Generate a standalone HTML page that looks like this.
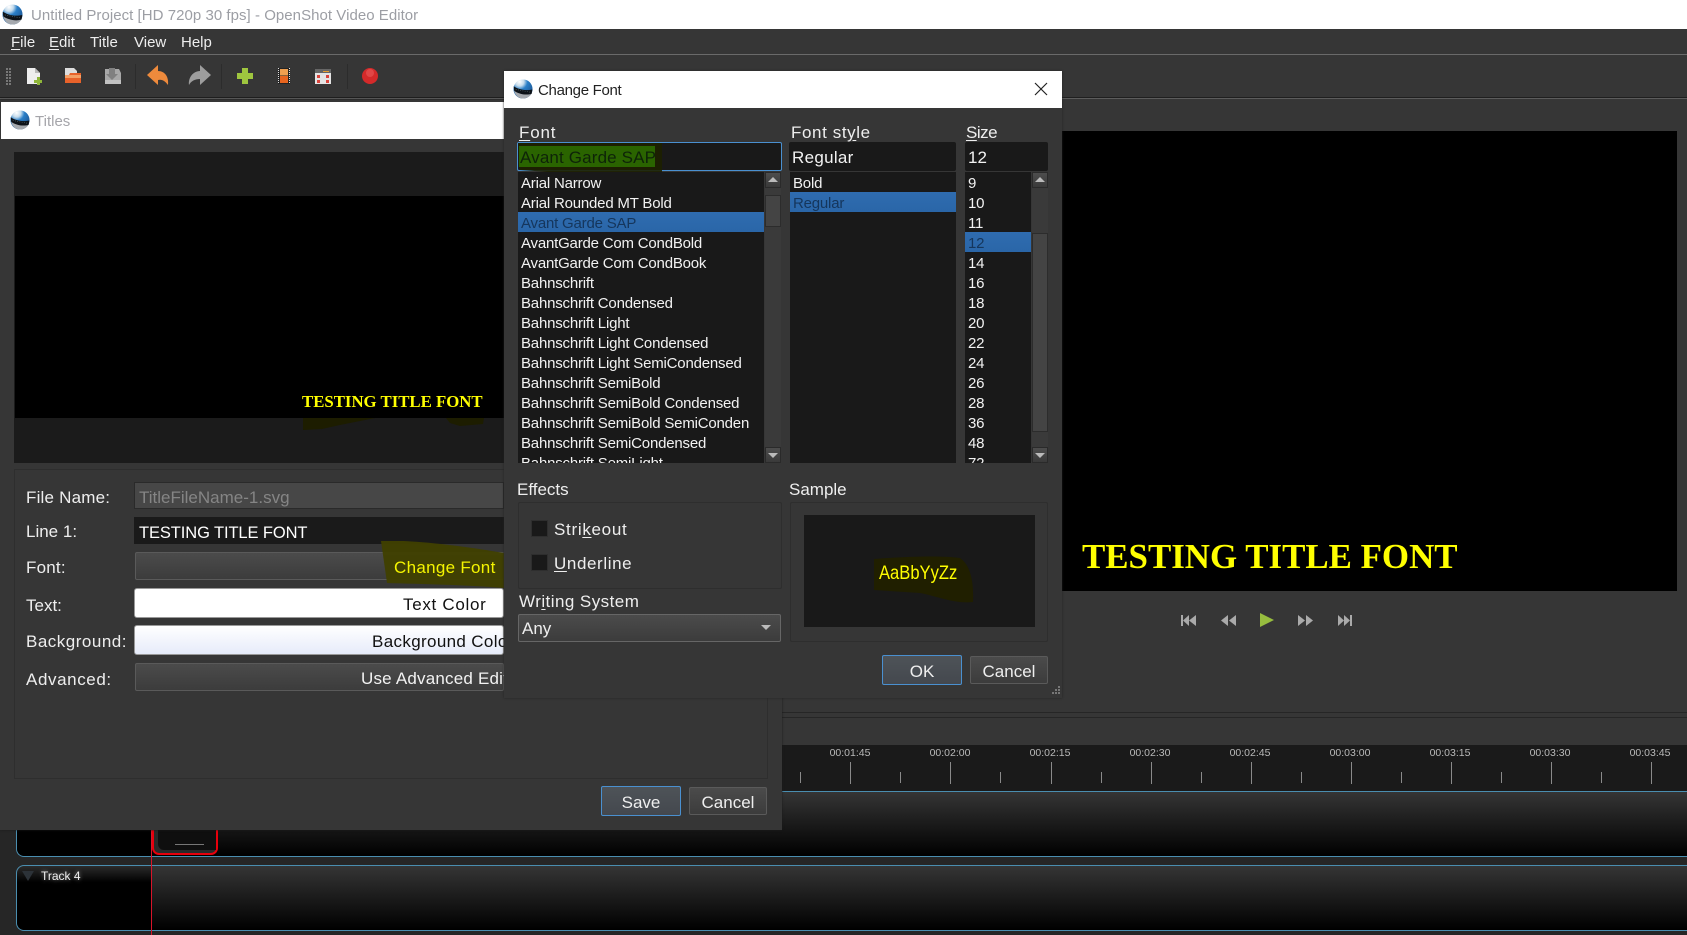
<!DOCTYPE html>
<html><head><meta charset="utf-8"><title>OpenShot</title>
<style>
html,body{margin:0;padding:0;background:#363636;}
body{width:1687px;height:935px;position:relative;overflow:hidden;font-family:"Liberation Sans",sans-serif;font-size:16px;color:#eee;}
div,span.a,svg.a{position:absolute;box-sizing:border-box;}
.t{position:absolute;white-space:nowrap;height:20px;line-height:20px;}
u{text-underline-offset:2px;}
.row{position:absolute;left:0;right:0;height:20px;line-height:23px;white-space:nowrap;padding-left:3px;font-size:15px;color:#f2f2f2;letter-spacing:-.2px;overflow:hidden;}
.sel{background:linear-gradient(#2f6cb0,#2a66a8);color:#15365c;}
.list{background:#191919;overflow:hidden;}
.sb{background:#3a3a3a;}
.thumb{background:#444;border:1px solid #2c2c2c;}
.sbtn{background:linear-gradient(#4d4d4d,#3a3a3a);border:1px solid #2a2a2a;}
.up{position:absolute;width:0;height:0;border-left:5px solid transparent;border-right:5px solid transparent;border-bottom:5px solid #bbb;}
.dn{position:absolute;width:0;height:0;border-left:5px solid transparent;border-right:5px solid transparent;border-top:5px solid #bbb;}
.btn{background:linear-gradient(#4b4b4b,#3c3c3c);border:1px solid #5a5a5a;border-radius:2px;}
.tick{position:absolute;width:1px;background:#8a8a8a;}
.lab{position:absolute;top:747px;width:60px;text-align:center;font-size:10.5px;line-height:12px;color:#b9b9b9;}
</style></head><body>
<svg width="0" height="0" style="position:absolute"><defs>
<radialGradient id="sp" cx="32%" cy="12%" r="75%"><stop offset="0" stop-color="#fff"/><stop offset=".3" stop-color="#c6dcec"/><stop offset=".55" stop-color="#2a7fc8"/><stop offset="1" stop-color="#1f5e9e"/></radialGradient>
<symbol id="logo" viewBox="0 0 22 22"><circle cx="11" cy="11" r="10.500" fill="url(#sp)"/><path d="M1 12C6 16 14 18 20.500 16 18.500 19.500 15 21.500 11 21.500 6 21.500 2 17.500 1 12Z" fill="#a5a9ae"/><path d="M.8 8C5 11 13 13.500 21.300 11.500L20.500 16.300C14 18.300 6 16.300 1.300 13Z" fill="#0d1218"/><path d="M3 11.500L19 14.500" stroke="#566" stroke-width=".8" stroke-dasharray="1 1.500"/></symbol>
</defs></svg>

<!-- title bar -->
<div style="left:0;top:0;width:1687px;height:29px;background:#fff"></div>
<svg class="a" style="left:2px;top:4px" width="21" height="21"><use href="#logo"/></svg>
<span class="t" style="left:31px;top:6px;font-size:15px;color:#9c9ea4;letter-spacing:.04px">Untitled Project [HD 720p 30 fps] - OpenShot Video Editor</span>

<!-- menu -->
<div style="left:0;top:29px;width:1687px;height:25px;background:#363636"></div>
<div style="left:0;top:54px;width:1687px;height:1px;background:#6a6a6a"></div>
<span class="t" style="left:11px;top:33px;font-size:15px"><u>F</u>ile</span>
<span class="t" style="left:49px;top:33px;font-size:15px"><u>E</u>dit</span>
<span class="t" style="left:90px;top:33px;font-size:15px">Title</span>
<span class="t" style="left:134px;top:33px;font-size:15px">View</span>
<span class="t" style="left:181px;top:33px;font-size:15px">Help</span>

<!-- toolbar -->
<div style="left:0;top:97px;width:1687px;height:1px;background:#1f1f1f"></div>
<div style="left:0;top:98px;width:1687px;height:1px;background:#5c5c5c"></div>
<svg class="a" style="left:0;top:60px" width="400" height="36" viewBox="0 60 400 36">
<g fill="#777"><rect x="6" y="68" width="2" height="2"/><rect x="9" y="68" width="2" height="2"/><rect x="6" y="71" width="2" height="2"/><rect x="9" y="71" width="2" height="2"/><rect x="6" y="74" width="2" height="2"/><rect x="9" y="74" width="2" height="2"/><rect x="6" y="77" width="2" height="2"/><rect x="9" y="77" width="2" height="2"/><rect x="6" y="80" width="2" height="2"/><rect x="9" y="80" width="2" height="2"/><rect x="6" y="83" width="2" height="2"/><rect x="9" y="83" width="2" height="2"/></g>
<g fill="#2c2c2c"><rect x="135" y="64" width="1" height="25"/><rect x="221" y="64" width="1" height="25"/><rect x="347" y="64" width="1" height="25"/></g>
<path d="M27 68h8l5 5v11H27Z" fill="#eee"/><path d="M35 68v5h5Z" fill="#bbb"/><path d="M37 77h3v3h2v3h-2v2h-3v-2h-3v-3h3Z" fill="#8fb63a"/>
<path d="M65 68h9l3 3v6H65Z" fill="#ddd"/><path d="M65 75h4l1-2h11v10H65Z" fill="#e8622a"/><path d="M65 75h16v3H65Z" fill="#f4a066"/>
<path d="M105 69h14l2 4v10l-1 1h-14l-1-1Z" fill="#a8a8a8"/><path d="M109 68h6v6h3l-6 6-6-6h3Z" fill="#808080"/><path d="M105 80h16v4h-16Z" fill="#c2c2c2"/>
<path d="M147 75L158 65V71C165 71 169 77 168 85 165 81 162 79 158 80V85Z" fill="#ee8a3c"/>
<path d="M211 75L200 65V71C193 71 188 78 189 85 191 81 195 79 200 79V85Z" fill="#9d9d9d"/>
<path d="M242 68h6v5h5v6h-5v5h-6v-5h-5v-6h5Z" fill="#9fc63f"/>
<rect x="278" y="68" width="12" height="16" fill="#222"/><path d="M278.500 68V84M289.500 68V84" stroke="#ddd" stroke-dasharray="1 1"/><rect x="280" y="69" width="8" height="6.500" fill="#f0a050"/><rect x="280" y="76" width="8" height="7" fill="#e8651f"/>
<rect x="315" y="69" width="16" height="15" fill="#e4e4e4"/><rect x="315" y="69" width="16" height="4" fill="#666"/><rect x="323" y="71" width="6" height="1" fill="#e8a030"/><g fill="#d9443c"><rect x="317" y="75" width="3" height="3"/><rect x="326" y="75" width="3" height="3"/><rect x="317" y="80" width="3" height="3"/><rect x="326" y="80" width="3" height="3"/></g>
<circle cx="370" cy="76" r="8" fill="#d42a2a"/><circle cx="370" cy="73" r="4" fill="#ea5a5a" opacity=".6"/>
</svg>

<!-- timeline / right region -->
<div style="left:782px;top:712px;width:905px;height:1px;background:#262626"></div>
<div style="left:782px;top:717px;width:905px;height:1px;background:#262626"></div>
<div style="left:0;top:745px;width:1687px;height:46px;background:#1a1a1a"></div>
<div style="left:0;top:791px;width:1687px;height:1px;background:#4a8eb0"></div>
<div style="left:0;top:792px;width:1687px;height:143px;background:#262626"></div>
<div style="left:16px;top:792px;width:1671px;height:65px;background:linear-gradient(#353535,#000);border:1px solid #4a8eb0;border-top:none;border-right:none;border-radius:0 0 0 8px"></div>
<div style="left:16px;top:865px;width:1671px;height:66px;background:linear-gradient(#353535,#000);border:1px solid #4a8eb0;border-right:none;border-radius:8px 0 0 8px"></div>
<div style="left:17px;top:792px;width:134px;height:64px;background:#000;border-radius:0 0 0 8px"></div>
<div style="left:17px;top:882px;width:134px;height:48px;background:#000;border-radius:0 0 0 8px"></div>
<div style="left:17px;top:866px;width:134px;height:16px;background:linear-gradient(#2b2b2b,#000);border-radius:8px 0 0 0"></div>
<div style="left:152px;top:800px;width:66px;height:55px;background:#2a2a2a;border:2px solid #e8000c;border-top:none;border-radius:0 0 7px 7px"></div>
<div style="left:158px;top:800px;width:58px;height:50px;background:#0f0f0f;border-radius:0 0 0 6px"></div>
<div style="left:175px;top:844px;width:29px;height:1px;background:#777"></div>
<div style="left:151px;top:800px;width:1px;height:135px;background:#d8142a"></div>
<svg class="a" style="left:22px;top:870px" width="12" height="12"><path d="M0 1 L12 1 L6 11Z" fill="#2c3238"/></svg>
<span class="t" style="left:41px;top:866px;font-size:12px;color:#eee;text-shadow:0 0 4px #fff8">Track 4</span>

<!-- ruler -->
<div class="tick" style="left:800px;top:772px;height:11px"></div><div class="tick" style="left:850px;top:762px;height:22px"></div>
<div class="tick" style="left:900px;top:772px;height:11px"></div><div class="tick" style="left:950px;top:762px;height:22px"></div>
<div class="tick" style="left:1000px;top:772px;height:11px"></div><div class="tick" style="left:1051px;top:762px;height:22px"></div>
<div class="tick" style="left:1101px;top:772px;height:11px"></div><div class="tick" style="left:1151px;top:762px;height:22px"></div>
<div class="tick" style="left:1201px;top:772px;height:11px"></div><div class="tick" style="left:1251px;top:762px;height:22px"></div>
<div class="tick" style="left:1301px;top:772px;height:11px"></div><div class="tick" style="left:1351px;top:762px;height:22px"></div>
<div class="tick" style="left:1401px;top:772px;height:11px"></div><div class="tick" style="left:1451px;top:762px;height:22px"></div>
<div class="tick" style="left:1501px;top:772px;height:11px"></div><div class="tick" style="left:1551px;top:762px;height:22px"></div>
<div class="tick" style="left:1601px;top:772px;height:11px"></div><div class="tick" style="left:1651px;top:762px;height:22px"></div>
<span class="lab" style="left:820px">00:01:45</span><span class="lab" style="left:920px">00:02:00</span>
<span class="lab" style="left:1020px">00:02:15</span><span class="lab" style="left:1120px">00:02:30</span>
<span class="lab" style="left:1220px">00:02:45</span><span class="lab" style="left:1320px">00:03:00</span>
<span class="lab" style="left:1420px">00:03:15</span><span class="lab" style="left:1520px">00:03:30</span>
<span class="lab" style="left:1620px">00:03:45</span>

<!-- video preview -->
<div style="left:1062px;top:131px;width:615px;height:460px;background:#000"></div>
<span class="t" style="left:1082px;top:537px;height:40px;font:bold 34.900px/40px 'Liberation Serif',serif;color:#ff0">TESTING TITLE FONT</span>
<svg class="a" style="left:1170px;top:610px" width="190" height="20" viewBox="1170 610 190 20">
<g fill="#aaa"><rect x="1181" y="615" width="2" height="11"/><path d="M1189 615v11l-6-5.500Z"/><path d="M1196 615v11l-7-5.500Z"/>
<path d="M1228 615v11l-7-5.500Z"/><path d="M1236 615v11l-7-5.500Z"/>
<path d="M1298 615v11l7-5.500Z"/><path d="M1306 615v11l7-5.500Z"/>
<path d="M1338 615v11l6-5.500Z"/><path d="M1344 615v11l6-5.500Z"/><rect x="1350" y="615" width="2" height="11"/></g>
<path d="M1260 613v14l14-7Z" fill="#97bd3f"/>
</svg>

<!-- Titles dialog -->
<div style="left:0;top:100px;width:782px;height:730px;background:#363636;box-shadow:0 0 2px #1a1a1a"></div>
<div style="left:1px;top:102px;width:503px;height:37px;background:#fff"></div>
<svg class="a" style="left:10px;top:110px" width="20" height="20"><use href="#logo"/></svg>
<span class="t" style="left:35px;top:112px;font-size:15px;color:#a5a5aa">Titles</span>
<div style="left:14px;top:152px;width:490px;height:311px;background:#1b1b1b"></div>
<div style="left:15px;top:196px;width:489px;height:222px;background:#000"></div>
<svg class="a" style="left:300px;top:418px" width="190" height="16"><path d="M3 0H75L40 7 22 11 3 12Z M146 0H184L183 6 160 8 150 5Z" fill="#1d1d00"/></svg>
<span class="t" style="left:302px;top:392px;font:bold 16.800px/20px 'Liberation Serif',serif;color:#ff0">TESTING TITLE FONT</span>

<div style="left:14px;top:469px;width:754px;height:310px;border:1px solid #2e2e2e"></div>
<span class="t" style="left:26px;top:488px;font-size:17px;letter-spacing:.2px">File Name:</span>
<span class="t" style="left:26px;top:522px;font-size:17px">Line 1:</span>
<span class="t" style="left:26px;top:558px;font-size:17px;letter-spacing:.2px">Font:</span>
<span class="t" style="left:26px;top:596px;font-size:17px">Text:</span>
<span class="t" style="left:26px;top:632px;font-size:17px;letter-spacing:.5px">Background:</span>
<span class="t" style="left:26px;top:670px;font-size:17px;letter-spacing:.6px">Advanced:</span>

<div style="left:134px;top:482px;width:370px;height:27px;background:#474747;border:1px solid #2a2a2a"></div>
<span class="t" style="left:139px;top:488px;font-size:17px;color:#858585">TitleFileName-1.svg</span>
<div style="left:134px;top:517px;width:370px;height:27px;background:#1a1a1a"></div>
<span class="t" style="left:139px;top:523px;font-size:16.500px;color:#fff;letter-spacing:-.1px">TESTING TITLE FONT</span>
<div class="btn" style="left:135px;top:552px;width:369px;height:28px"></div>
<svg class="a" style="left:380px;top:541px" width="124" height="50"><path d="M1 0C30 -2 90 6 124 12V47C90 44 40 43 7 42Z" fill="#404000" opacity=".95"/></svg>
<span class="t" style="left:394px;top:558px;font-size:17px;color:#f4f400;letter-spacing:.3px">Change Font</span>
<div style="left:134px;top:588px;width:370px;height:30px;background:#fff;border:1px solid #999;border-radius:3px"></div>
<span class="t" style="left:403px;top:595px;font-size:17px;color:#111;letter-spacing:.7px">Text Color</span>
<div style="left:134px;top:625px;width:370px;height:30px;background:linear-gradient(#fff,#e6ebfa);border:1px solid #999;border-radius:3px"></div>
<div style="left:372px;top:631px;width:132px;height:22px;overflow:hidden"><span class="t" style="left:0;top:1px;font-size:17px;color:#111;letter-spacing:.35px">Background Color</span></div>
<div class="btn" style="left:135px;top:663px;width:369px;height:28px"></div>
<div style="left:361px;top:668px;width:143px;height:22px;overflow:hidden"><span class="t" style="left:0;top:1px;font-size:17px;color:#f2f2f2;letter-spacing:.2px">Use Advanced Editor</span></div>

<div style="left:601px;top:786px;width:80px;height:30px;background:linear-gradient(#4e5358,#44484e);border:1px solid #4a90d0;border-radius:2px"></div>
<span class="t" style="left:601px;top:793px;width:80px;text-align:center;font-size:17px">Save</span>
<div class="btn" style="left:689px;top:787px;width:78px;height:28px"></div>
<span class="t" style="left:689px;top:793px;width:78px;text-align:center;font-size:17px">Cancel</span>

<!-- Change Font dialog -->
<div style="left:504px;top:71px;width:558px;height:627px;background:#363636;box-shadow:0 0 2px #222"></div>
<div style="left:504px;top:71px;width:558px;height:37px;background:#fff"></div>
<svg class="a" style="left:513px;top:79px" width="20" height="20"><use href="#logo"/></svg>
<span class="t" style="left:538px;top:81px;font-size:15px;color:#222;letter-spacing:-.3px">Change Font</span>
<svg class="a" style="left:1034px;top:82px" width="14" height="14"><path d="M1 1L13 13M13 1L1 13" stroke="#222" stroke-width="1.200"/></svg>

<span class="t" style="left:519px;top:123px;font-size:17px;letter-spacing:.8px"><u>F</u>ont</span>
<span class="t" style="left:791px;top:123px;font-size:17px;letter-spacing:.6px">Font st<u>y</u>le</span>
<span class="t" style="left:966px;top:123px;font-size:17px;letter-spacing:-.5px"><u>S</u>ize</span>

<div style="left:517px;top:142px;width:265px;height:29px;background:#191919;border:1px solid #4a90d0;border-radius:2px"></div>
<svg class="a" style="left:518px;top:143px" width="145" height="40"><path d="M0 0H144V38C100 36 50 30 2 27Z" fill="#1d2000" opacity=".9"/></svg>
<div style="left:519px;top:146px;width:136px;height:21px;background:#2a6400"></div>
<span class="t" style="left:520px;top:148px;font-size:17px;color:#0e2408;letter-spacing:.15px">Avant Garde SAP</span>
<div style="left:789px;top:142px;width:167px;height:29px;background:#191919;border-radius:2px"></div>
<span class="t" style="left:792px;top:148px;font-size:17px;color:#f2f2f2;letter-spacing:.3px">Regular</span>
<div style="left:965px;top:142px;width:83px;height:29px;background:#191919;border-radius:2px"></div>
<span class="t" style="left:968px;top:148px;font-size:17px;color:#f2f2f2">12</span>

<div class="list" style="left:518px;top:172px;width:246px;height:291px">
<div class="row" style="top:0">Arial Narrow</div><div class="row" style="top:20px">Arial Rounded MT Bold</div>
<div class="row sel" style="top:40px">Avant Garde SAP</div><div class="row" style="top:60px">AvantGarde Com CondBold</div>
<div class="row" style="top:80px">AvantGarde Com CondBook</div><div class="row" style="top:100px">Bahnschrift</div>
<div class="row" style="top:120px">Bahnschrift Condensed</div><div class="row" style="top:140px">Bahnschrift Light</div>
<div class="row" style="top:160px">Bahnschrift Light Condensed</div><div class="row" style="top:180px">Bahnschrift Light SemiCondensed</div>
<div class="row" style="top:200px">Bahnschrift SemiBold</div><div class="row" style="top:220px">Bahnschrift SemiBold Condensed</div>
<div class="row" style="top:240px">Bahnschrift SemiBold SemiConden</div><div class="row" style="top:260px">Bahnschrift SemiCondensed</div>
<div class="row" style="top:280px">Bahnschrift SemiLight</div>
</div>
<div class="sb" style="left:765px;top:172px;width:16px;height:291px"></div>
<div class="sbtn" style="left:765px;top:172px;width:16px;height:16px"><span class="up" style="left:2px;top:4px"></span></div>
<div class="thumb" style="left:765px;top:195px;width:16px;height:32px"></div>
<div class="sbtn" style="left:765px;top:447px;width:16px;height:16px"><span class="dn" style="left:2px;top:5px"></span></div>

<div class="list" style="left:790px;top:172px;width:166px;height:291px">
<div class="row" style="top:0">Bold</div><div class="row sel" style="top:20px">Regular</div>
</div>

<div class="list" style="left:965px;top:172px;width:66px;height:291px">
<div class="row" style="top:0">9</div><div class="row" style="top:20px">10</div><div class="row" style="top:40px">11</div>
<div class="row sel" style="top:60px">12</div><div class="row" style="top:80px">14</div><div class="row" style="top:100px">16</div>
<div class="row" style="top:120px">18</div><div class="row" style="top:140px">20</div><div class="row" style="top:160px">22</div>
<div class="row" style="top:180px">24</div><div class="row" style="top:200px">26</div><div class="row" style="top:220px">28</div>
<div class="row" style="top:240px">36</div><div class="row" style="top:260px">48</div><div class="row" style="top:280px">72</div>
</div>
<div class="sb" style="left:1032px;top:172px;width:16px;height:291px"></div>
<div class="sbtn" style="left:1032px;top:172px;width:16px;height:16px"><span class="up" style="left:2px;top:4px"></span></div>
<div class="thumb" style="left:1032px;top:233px;width:16px;height:199px"></div>
<div class="sbtn" style="left:1032px;top:447px;width:16px;height:16px"><span class="dn" style="left:2px;top:5px"></span></div>

<span class="t" style="left:517px;top:480px;font-size:17px">Effects</span>
<span class="t" style="left:789px;top:480px;font-size:17px">Sample</span>
<div style="left:518px;top:502px;width:264px;height:87px;border:1px solid #2e2e2e;border-radius:2px"></div>
<div style="left:531px;top:520px;width:17px;height:17px;background:#191919;border:1px solid #2e2e2e"></div>
<div style="left:531px;top:554px;width:17px;height:17px;background:#191919;border:1px solid #2e2e2e"></div>
<span class="t" style="left:554px;top:520px;font-size:17px;letter-spacing:.7px">Stri<u>k</u>eout</span>
<span class="t" style="left:554px;top:554px;font-size:17px;letter-spacing:.6px"><u>U</u>nderline</span>
<span class="t" style="left:519px;top:592px;font-size:17px;letter-spacing:.45px">Wr<u>i</u>ting System</span>
<div class="btn" style="left:518px;top:614px;width:263px;height:28px;border-color:#666"></div>
<span class="t" style="left:522px;top:619px;font-size:17px">Any</span>
<span class="dn" style="left:761px;top:625px"></span>

<div style="left:790px;top:502px;width:258px;height:140px;border:1px solid #2e2e2e;border-radius:2px"></div>
<div style="left:804px;top:515px;width:231px;height:112px;background:#191919"></div>
<svg class="a" style="left:870px;top:555px" width="106" height="50"><path d="M4 4C30 2 70 0 90 3 100 10 104 25 103 47 85 49 70 42 50 38L4 35Z" fill="#201f00"/></svg>
<span class="t" style="left:879px;top:563px;font-size:19.500px;color:#ff0;transform:scaleX(.85);transform-origin:0 50%">AaBbYyZz</span>

<div style="left:882px;top:655px;width:80px;height:30px;background:linear-gradient(#4e5358,#44484e);border:1px solid #4a90d0;border-radius:2px"></div>
<span class="t" style="left:882px;top:662px;width:80px;text-align:center;font-size:17px">OK</span>
<div class="btn" style="left:970px;top:656px;width:78px;height:28px"></div>
<span class="t" style="left:970px;top:662px;width:78px;text-align:center;font-size:17px">Cancel</span>
<svg class="a" style="left:1050px;top:685px" width="11" height="12"><g fill="#777"><rect x="8" y="1" width="2" height="2"/><rect x="5" y="4" width="2" height="2"/><rect x="8" y="4" width="2" height="2"/><rect x="2" y="7" width="2" height="2"/><rect x="5" y="7" width="2" height="2"/><rect x="8" y="7" width="2" height="2"/></g></svg>
</body></html>
